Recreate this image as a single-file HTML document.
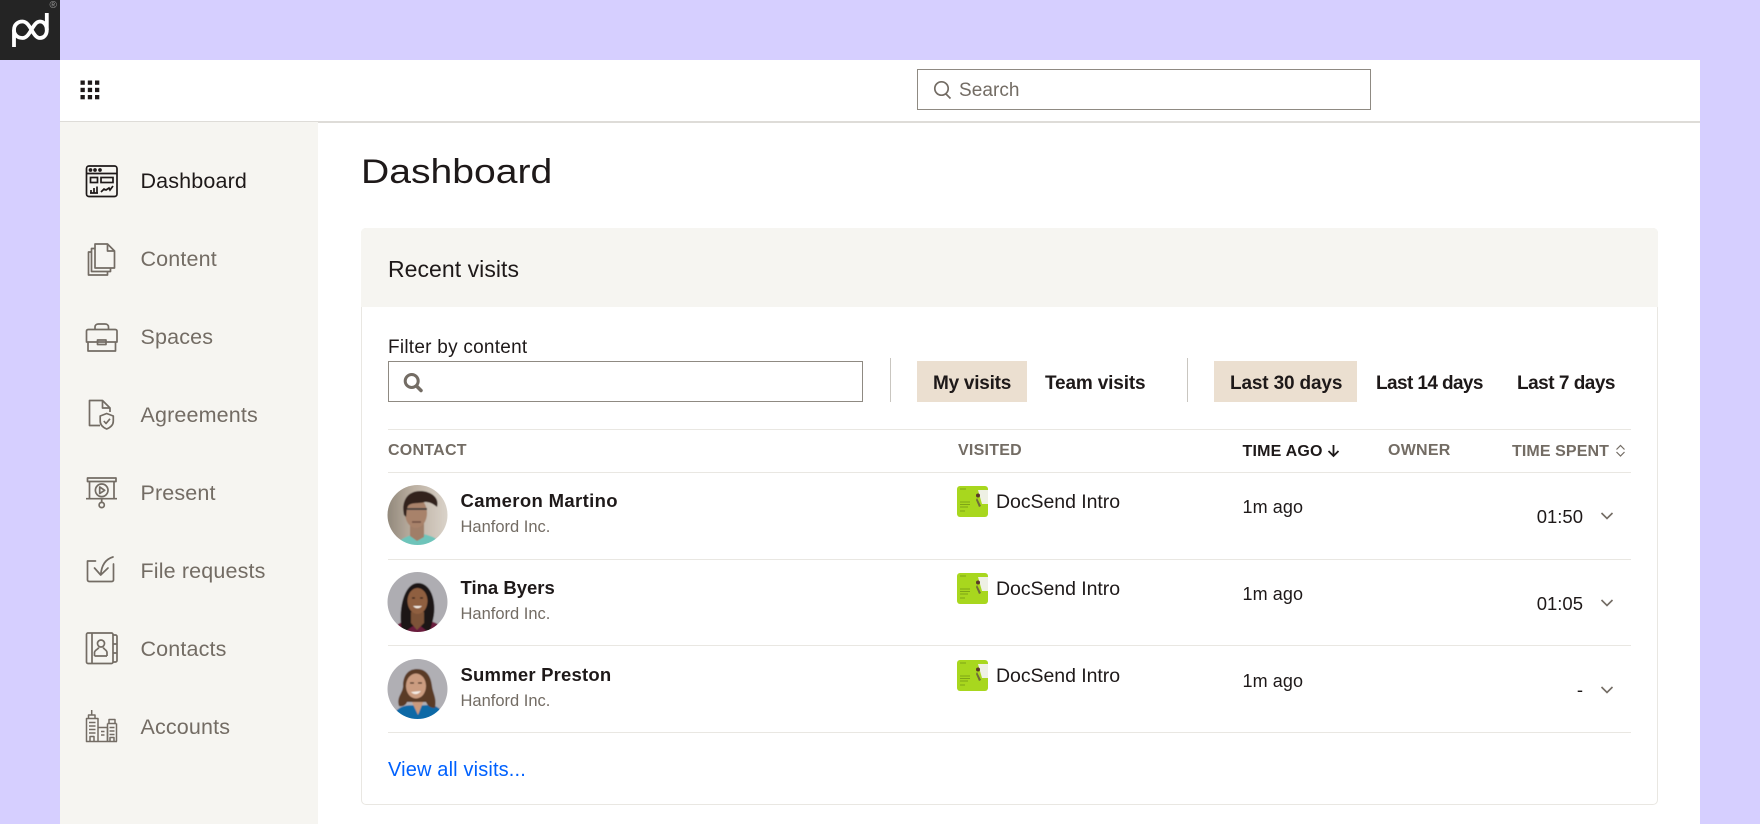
<!DOCTYPE html>
<html lang="en"><head><meta charset="utf-8"><title>Dashboard</title>
<style>
html,body{margin:0;padding:0}
body{width:1760px;height:824px;overflow:hidden;position:relative;background:#d6cfff;font-family:"Liberation Sans",sans-serif;color:#1e1919}
.b{position:absolute}
.t{position:absolute;line-height:24px;height:24px;white-space:nowrap}
.nav{left:140.5px;font-size:21.5px;color:#736c64;letter-spacing:.15px}
.btn{font-size:19px;font-weight:700;letter-spacing:-.1px;color:#1e1919}
.th{font-size:16px;font-weight:700;color:#736c64;letter-spacing:.25px}
.name{left:460.5px;font-size:18.5px;font-weight:700;letter-spacing:.2px}
.co{left:460.5px;font-size:16.5px;color:#736c64}
.doc{left:996px;font-size:19.5px;letter-spacing:-.05px}
.ago{left:1242.5px;font-size:18px;letter-spacing:.1px}
.sp{font-size:18.5px;right:177px}
.ln{position:absolute;left:388px;width:1243px;height:1px;background:#e9e7e2}
svg{position:absolute;left:0;top:0}
</style></head><body>
<div class="b" style="left:0;top:0;width:60px;height:60px;background:#242424"></div>
<div class="b" style="left:60px;top:60px;width:1640px;height:764px;background:#fff"></div>
<div class="b" style="left:60px;top:121px;width:1640px;height:1.5px;background:#dedcd8"></div>
<div class="b" style="left:60px;top:122px;width:258px;height:702px;background:#f6f5f1"></div>
<div class="b" style="left:917px;top:69px;width:452px;height:39px;border:1.5px solid #8f8a82"></div>
<div class="t" style="left:959px;top:78.5px;font-size:19px;color:#736c64;letter-spacing:.05px">Search</div>

<div class="t nav" style="top:169px;color:#1e1919">Dashboard</div>
<div class="t nav" style="top:247px">Content</div>
<div class="t nav" style="top:325px">Spaces</div>
<div class="t nav" style="top:403px">Agreements</div>
<div class="t nav" style="top:481px">Present</div>
<div class="t nav" style="top:559px">File requests</div>
<div class="t nav" style="top:637px">Contacts</div>
<div class="t nav" style="top:715px">Accounts</div>

<div class="t" style="left:361px;top:152px;height:40px;line-height:40px;font-size:34px;transform-origin:0 50%;transform:scaleX(1.15)">Dashboard</div>

<div class="b" style="left:361px;top:228px;width:1297px;height:577px;border:1.5px solid #e9e7e2;border-radius:5px;background:#fff;box-sizing:border-box"></div>
<div class="b" style="left:361px;top:228px;width:1297px;height:79px;background:#f6f5f1;border-radius:5px 5px 0 0"></div>
<div class="t" style="left:388px;top:256.5px;font-size:23px;letter-spacing:.05px">Recent visits</div>

<div class="t" style="left:388px;top:335.5px;font-size:19px;letter-spacing:.25px">Filter by content</div>
<div class="b" style="left:388px;top:361px;width:473px;height:39px;border:1.5px solid #8f8a82"></div>
<div class="b" style="left:890px;top:358px;width:1px;height:44px;background:#c9c6c0"></div>
<div class="b" style="left:1187px;top:358px;width:1px;height:44px;background:#c9c6c0"></div>
<div class="b" style="left:917px;top:361px;width:110px;height:41px;background:#ebdfd0"></div>
<div class="b" style="left:1214px;top:361px;width:143px;height:41px;background:#ebdfd0"></div>
<div class="t btn" style="left:933px;top:372px;letter-spacing:-.25px">My visits</div>
<div class="t btn" style="left:1045px;top:372px;letter-spacing:-.15px">Team visits</div>
<div class="t btn" style="left:1230px;top:372px;letter-spacing:-.15px">Last 30 days</div>
<div class="t btn" style="left:1376px;top:372px;letter-spacing:-.6px">Last 14 days</div>
<div class="t btn" style="left:1517px;top:372px;letter-spacing:-.5px">Last 7 days</div>

<div class="ln" style="top:429px"></div>
<div class="ln" style="top:472px"></div>
<div class="ln" style="top:559px"></div>
<div class="ln" style="top:645px"></div>
<div class="ln" style="top:732px"></div>

<div class="t th" style="left:388px;top:439px">CONTACT</div>
<div class="t th" style="left:958px;top:438.5px">VISITED</div>
<div class="t th" style="left:1242.5px;top:440px;color:#1e1919;letter-spacing:.2px">TIME AGO</div>
<div class="t th" style="left:1388px;top:438.5px">OWNER</div>
<div class="t th" style="left:1512px;top:440px;letter-spacing:.1px">TIME SPENT</div>

<div class="t name" style="top:489px;letter-spacing:.35px">Cameron Martino</div>
<div class="t co" style="top:515px">Hanford Inc.</div>
<div class="t name" style="top:576px;letter-spacing:0">Tina Byers</div>
<div class="t co" style="top:602px">Hanford Inc.</div>
<div class="t name" style="top:663px">Summer Preston</div>
<div class="t co" style="top:689px">Hanford Inc.</div>

<div class="t doc" style="top:490px">DocSend Intro</div>
<div class="t doc" style="top:577px">DocSend Intro</div>
<div class="t doc" style="top:664px">DocSend Intro</div>
<div class="t ago" style="top:495px">1m ago</div>
<div class="t ago" style="top:582px">1m ago</div>
<div class="t ago" style="top:669px">1m ago</div>
<div class="t sp" style="top:505px">01:50</div>
<div class="t sp" style="top:592px">01:05</div>
<div class="t sp" style="top:678px">-</div>
<div class="t" style="left:388px;top:757.5px;font-size:20px;color:#0061fe;letter-spacing:.15px">View all visits...</div>
<div class="t" style="left:49.5px;top:-6px;font-size:10px;color:#9a9a9a">®</div>

<svg width="1760" height="824" viewBox="0 0 1760 824" fill="none">
<defs>
<clipPath id="a1"><circle cx="417.5" cy="515" r="30"/></clipPath>
<clipPath id="a2"><circle cx="417.5" cy="602" r="30"/></clipPath>
<clipPath id="a3"><circle cx="417.5" cy="689" r="30"/></clipPath>
<filter id="bl" x="-10%" y="-10%" width="120%" height="120%"><feGaussianBlur stdDeviation="0.6"/></filter>
<linearGradient id="g1" x1="0" x2="1" y1="0" y2="0"><stop offset="0" stop-color="#8e8578"/><stop offset=".45" stop-color="#bdb1a3"/><stop offset="1" stop-color="#dcd5cc"/></linearGradient>
<g id="thumb">
<rect x="0" y="0" width="31" height="31" rx="3" fill="#a8d71e"/>
<path d="M21 4h10v14h-6z" fill="#eef0e4"/>
<circle cx="21" cy="9.5" r="2" fill="#5a3a28"/>
<path d="M20 12l4 8-2 1-3-7z" fill="#6e6a3a"/>
<path d="M3 3h6M3 16h10M3 18.5h10M3 21h8M3 25h5" stroke="#7ea516" stroke-width=".9"/>
</g>
</defs>

<!-- logo -->
<g stroke="#fff" stroke-width="3.8" fill="none">
<path d="M14 47V30C14 24.500 18 21.500 22.500 21.500C30.500 21.500 32.500 38 40 38C43.800 38 46.800 35 46.800 30V13"/>
<path d="M14 30C14 35 18 38 22.500 38C30.500 38 32.500 21.500 40 21.500C43.800 21.500 46.800 25 46.800 30"/>
</g>

<!-- grid -->
<g fill="#1e1919">
<rect x="80.500" y="80.500" width="4.300" height="4.300"/><rect x="87.800" y="80.500" width="4.300" height="4.300"/><rect x="95" y="80.500" width="4.300" height="4.300"/>
<rect x="80.500" y="87.800" width="4.300" height="4.300"/><rect x="87.800" y="87.800" width="4.300" height="4.300"/><rect x="95" y="87.800" width="4.300" height="4.300"/>
<rect x="80.500" y="95" width="4.300" height="4.300"/><rect x="87.800" y="95" width="4.300" height="4.300"/><rect x="95" y="95" width="4.300" height="4.300"/>
</g>

<!-- top search -->
<g stroke="#736c64" stroke-width="1.700"><circle cx="941.500" cy="88.500" r="6.700"/><path d="M946 94l4.500 4.500"/></g>

<!-- dashboard icon -->
<g stroke="#1e1919" stroke-width="1.700">
<rect x="86.500" y="166" width="30.500" height="30.500" rx="2.500"/>
<path d="M86.500 173.500H117"/>
<circle cx="90.500" cy="170" r="1"/><circle cx="95" cy="170" r="1"/><circle cx="100" cy="170" r="1"/>
<rect x="90.500" y="177.500" width="7" height="5"/><rect x="101" y="177.500" width="12" height="5"/>
<path d="M90 193H98M91 193V190M94 193V188M97 193V186.500M101 192l3-3 2 1 3-2 1 2 3-4" />
</g>

<!-- content icon -->
<g stroke="#736c64" stroke-width="1.700" stroke-linejoin="round">
<path d="M95 244H107.500L114.500 251V268H95Z"/><path d="M107.500 244V251H114.500"/>
<path d="M95 248.500H91.500V271.500H110.500V268"/><path d="M91.500 252H88.500V275H107.500V271.500"/>
</g>

<!-- spaces icon -->
<g stroke="#736c64" stroke-width="1.700" stroke-linejoin="round">
<path d="M95 329V327C95 325 96.500 324 98.500 324H105C107 324 108.500 325 108.500 327V329"/>
<path d="M86.500 342V331C86.500 330 87.500 329.500 88.500 329.500H115C116 329.500 117 330 117 331V342Z"/>
<path d="M88 342V351H115.500V342"/>
<rect x="97.500" y="340" width="8.500" height="4.500"/>
</g>

<!-- agreements icon -->
<g stroke="#736c64" stroke-width="1.700" stroke-linejoin="round">
<path d="M100 425.500H89.500V400.500H102.500L110 408V412"/><path d="M102.500 400.500V408H110"/>
<path d="M106.700 413.500L113.300 416V421C113.300 425 110.500 427.500 106.700 429C103 427.500 100.200 425 100.200 421V416Z"/>
<path d="M103.800 421L106 423.500L110 418.800"/>
</g>

<!-- present icon -->
<g stroke="#736c64" stroke-width="1.700" stroke-linejoin="round">
<rect x="87.500" y="478" width="28.500" height="3.500"/>
<path d="M89.500 481.500V498.500M114 481.500V498.500M86 498.700H117M101.700 498.700V502.500"/>
<circle cx="101.700" cy="490.300" r="6.300"/><path d="M99.700 487V493.500L104.700 490.300Z"/>
<circle cx="101.700" cy="505" r="2.600"/>
</g>

<!-- file requests icon -->
<g stroke="#736c64" stroke-width="1.700" stroke-linejoin="round" stroke-linecap="round">
<path d="M95.500 561H87.500V580C87.500 581 88.500 581.500 89.500 581.500H111.500C112.500 581.500 113.500 581 113.500 580V564"/>
<path d="M113 557C106 559 101.500 565 100.700 575M94.500 568L100.700 575L108 568"/>
</g>

<!-- contacts icon -->
<g stroke="#736c64" stroke-width="1.700" stroke-linejoin="round">
<rect x="86.500" y="633" width="26.500" height="30.500" rx="1.500"/>
<path d="M92 633V663.500"/>
<path d="M113 635H115.500C116.300 635 117 635.700 117 636.500V660.500C117 661.300 116.300 662 115.500 662H113M113 644H117M113 653H117"/>
<circle cx="101" cy="643.500" r="3.500"/>
<path d="M94.500 656V652.500C94.500 650 98 649.500 98.800 647.500M107 656V652.500C107 650 104 649.500 103.200 647.500M94.500 656H107"/>
</g>

<!-- accounts icon -->
<g stroke="#736c64" stroke-width="1.500" stroke-linejoin="round">
<path d="M91.700 710V715M88.500 718.500V715H95V718.500"/>
<path d="M86.500 741.500V718.500H98V741.500ZM86.500 741.500H117"/>
<path d="M89 722.500H95.500M89 726H95.500M89 729.500H95.500M89 733H95.500"/>
<path d="M90 741V736.500H94V741"/>
<path d="M98 727.500H107.500V741.500"/>
<path d="M101 731.500H104.500M101 735H104.500"/>
<path d="M107.500 723.500V741.500M116.500 723.500V741.500M107.500 723.500H116.500M109 723.500V719.500H115V723.500"/>
<path d="M109.500 727.500H114.500M109.500 731H114.500M109.500 734.500H114.500"/>
<path d="M110 741V737.500H114V741"/>
</g>

<!-- filter search -->
<g stroke="#736c64"><circle cx="411.700" cy="381" r="6.500" stroke-width="3"/><path d="M416.500 386L421 390.500" stroke-width="3.500" stroke-linecap="round"/></g>

<!-- sort arrows -->
<g stroke="#1e1919" stroke-width="1.800"><path d="M1333.500 445V456M1328.500 451L1333.500 456L1338.500 451"/></g>
<g stroke="#736c64" stroke-width="1.200"><path d="M1616.500 449.500L1620.500 445.500L1624.500 449.500M1616.500 452L1620.500 456L1624.500 452"/></g>

<!-- row chevrons -->
<g stroke="#736c64" stroke-width="1.600"><path d="M1601.500 513L1607 518.500L1612.500 513M1601.500 600L1607 605.500L1612.500 600M1601.500 687L1607 692.500L1612.500 687"/></g>

<!-- thumbnails -->
<use href="#thumb" x="957" y="486"/>
<use href="#thumb" x="957" y="573"/>
<use href="#thumb" x="957" y="660"/>

<!-- avatar 1 -->
<g clip-path="url(#a1)"><g filter="url(#bl)">
<rect x="385" y="483" width="65" height="65" fill="url(#g1)"/>
<path d="M396 551C398 536 408 538 412 534H424C428 536 440 536 444 551Z" fill="#6ec4ba"/>
<path d="M410 522H424V537L417 541L410 536Z" fill="#a07e68"/>
<ellipse cx="416" cy="513" rx="11" ry="15" fill="#a8826a"/>
<path d="M404 515C401 502 407 491 420 491C431 491 440 498 437 507C432 503 429 502 425 502C418 504 411 502 408 506C406 510 407 513 406 517Z" fill="#33241e"/>
<path d="M407 509H427" stroke="#3c3a38" stroke-width="1.800"/>
<path d="M412 522H421" stroke="#6f4e42" stroke-width="1.500"/>
</g></g>

<!-- avatar 2 -->
<g clip-path="url(#a2)"><g filter="url(#bl)">
<rect x="385" y="570" width="65" height="65" fill="#aeadb2"/>
<path d="M390 638C394 622 404 620 417 620C432 620 442 622 446 638Z" fill="#6b1b3d"/>
<path d="M403 634C397 614 403 583 418 583C433 583 437 606 433 620C431 626 431 630 428 632C424 629 420 625 418 625C412 625 408 630 403 634Z" fill="#1b1618"/>
<path d="M411 612H424V623L417 630L411 623Z" fill="#7d5238"/>
<ellipse cx="417.500" cy="601" rx="10" ry="13" fill="#8f5f40"/>
<path d="M413 606C416 609 419 609 422 606Z" fill="#f3ebe4"/>
<path d="M412 598h3M420 598h3" stroke="#2a1a14" stroke-width="1.300"/>
</g></g>

<!-- avatar 3 -->
<g clip-path="url(#a3)"><g filter="url(#bl)">
<rect x="385" y="657" width="65" height="65" fill="#b0afb4"/>
<path d="M391 722C395 706 405 704 418 706C432 704 442 704 446 722Z" fill="#0d69a6"/>
<path d="M411 700H424L418 715Z" fill="#c99a7e"/>
<path d="M399 706C396 696 404 693 403 684C404 673 410 669 417 669C427 669 431 677 432 686C433 694 437 698 435 708C430 708 428 706 426 702H407C406 705 403 707 399 706Z" fill="#5a3a26"/>
<ellipse cx="416" cy="686" rx="10" ry="12.500" fill="#cb9c80"/>
<path d="M411 692C414 695 418 695 421 691Z" fill="#f5ede6"/>
<path d="M410 683h4M418 683h4" stroke="#3a2418" stroke-width="1.300"/>
</g></g>
</svg>
</body></html>
